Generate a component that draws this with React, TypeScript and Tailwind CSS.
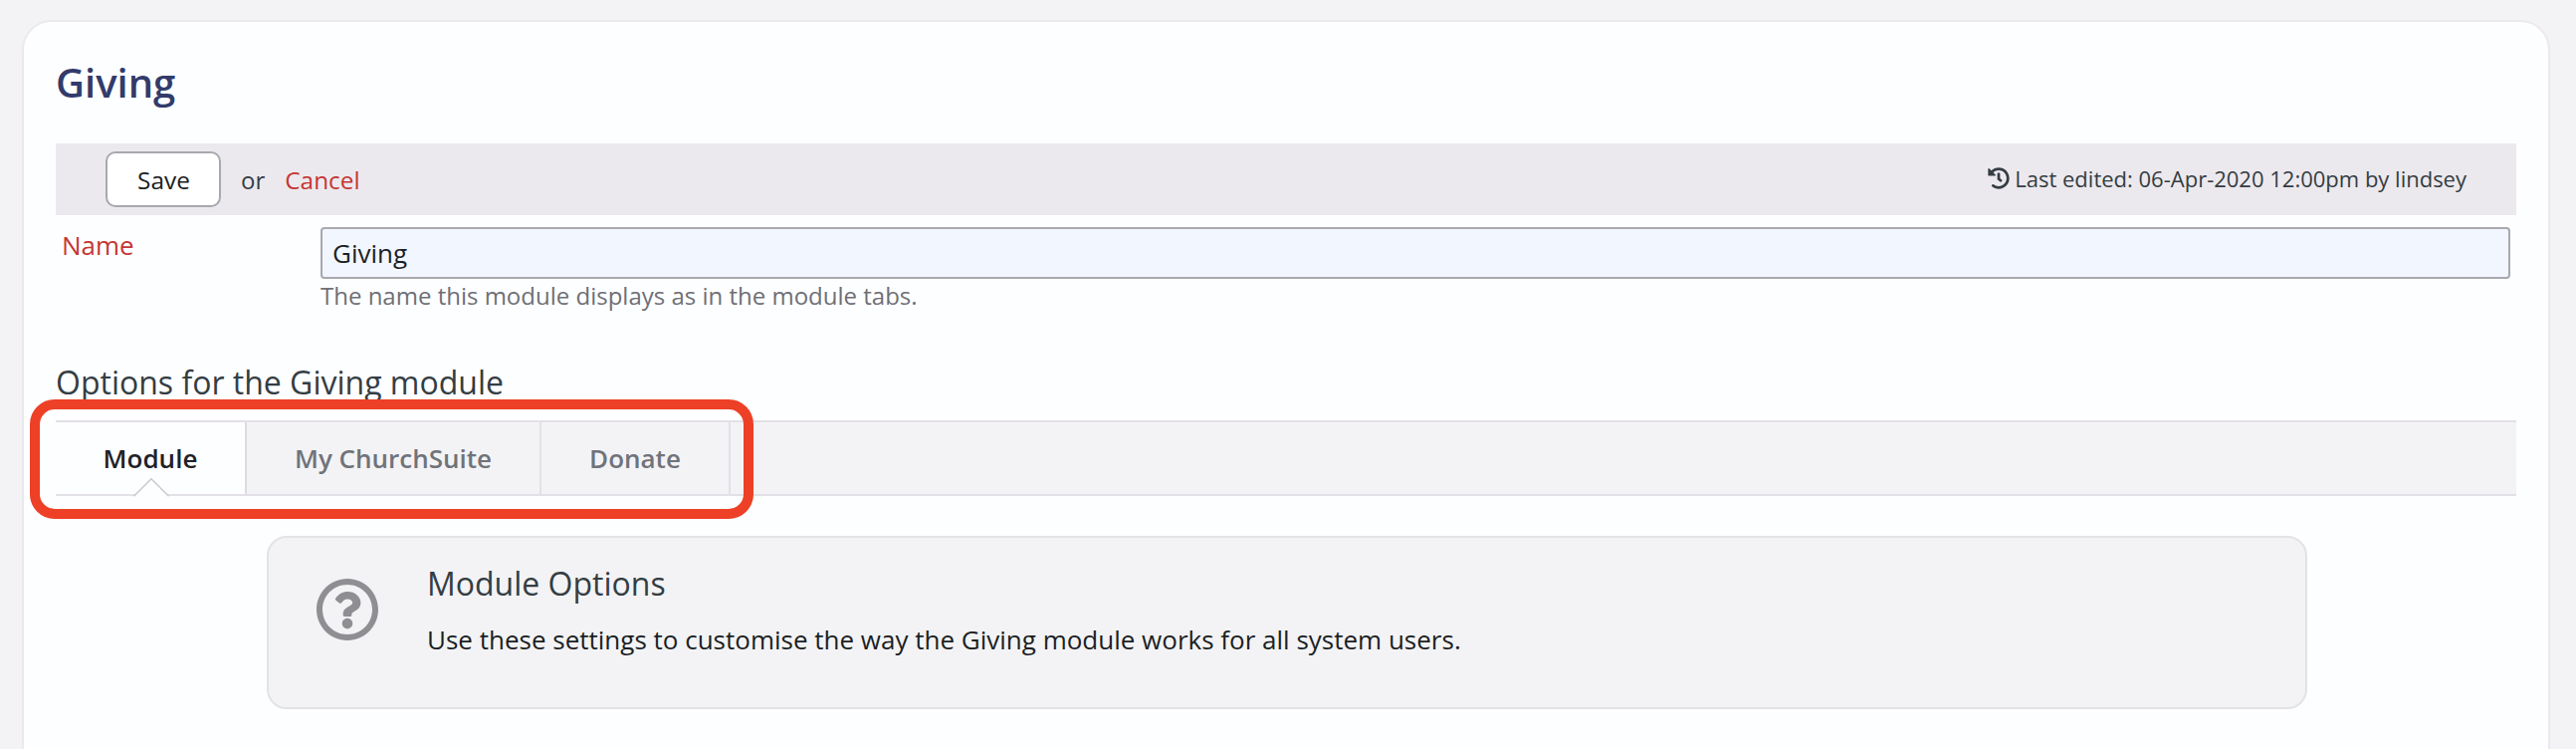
import React from "react";
import { FaHistory, FaRegQuestionCircle } from "react-icons/fa";

function ActionBar() {
  return (
    <div className="mt-[31px] flex h-[72px] items-center bg-[#ece9ee] px-[50px] text-[24.4px] leading-[36px] text-[#343d43]">
      <button className="flex h-14 w-[116px] items-center justify-center rounded-[10px] border-2 border-[#a8a8ae] bg-white pt-[2px] pl-px text-[#1b1f24]">
        Save
      </button>
      <span className="ml-5 pt-[2px] text-[24px]">or</span>
      <a className="ml-5 pt-[2px] text-[#c53734]">Cancel</a>
      <span className="ml-auto flex items-center pb-[2px] text-[22px] leading-[30px]">
        <FaHistory className="mr-[5px] size-[22px]" />
        Last edited: 06-Apr-2020 12:00pm by lindsey
      </span>
    </div>
  );
}

function NameField() {
  return (
    <div className="flex pt-3 pr-[6px]">
      <label className="w-[266px] shrink-0 pl-[6px] text-[26px] leading-9 text-[#c53734]">Name</label>
      <div className="grow">
        <div className="flex h-[52px] items-center rounded-[4px] border-2 border-[#a8a8ae] bg-[#f2f6fe] px-[10px] text-[26px] text-[#1b1f24]">
          Giving
        </div>
        <p className="text-[24px] leading-[34px] text-[#6f6f76]">
          The name this module displays as in the module tabs.
        </p>
      </div>
    </div>
  );
}

function Tabs() {
  return (
    <div className="mt-4 flex h-[76px] border-y-2 border-[#e3e0e8] bg-[#f3f3f5] text-[26px] font-semibold text-[#70737a]">
      <div className="relative flex w-[192px] items-center justify-center border-r-2 border-[#dcdbdf] bg-[#fdfeff] text-[#1f2227]">
        Module
        <svg className="absolute top-[55px] left-[77px]" width="38" height="20" viewBox="0 0 38 20" fill="none">
          <path d="M1.5 19.5 19 2 36.5 19.5V20H1.5Z" fill="#fdfeff" />
          <path d="M1.5 19.2 19 1.7 36.5 19.2" stroke="#c8c8cc" strokeWidth="1.4" />
        </svg>
      </div>
      <div className="flex w-[296px] items-center justify-center border-r-2 border-[#e3e0e8]">My ChurchSuite</div>
      <div className="flex w-[190px] items-center justify-center border-r-2 border-[#e3e0e8]">Donate</div>
    </div>
  );
}

function ModuleOptions() {
  return (
    <div className="mt-10 mr-[210px] ml-[212px] flex h-[174px] rounded-[20px] border-2 border-[#e3e3e5] bg-[#f3f3f5] pt-[22px] pl-[47px]">
      <FaRegQuestionCircle className="mt-[18px] size-16 shrink-0 text-[#8e8e93]" />
      <div className="ml-12">
        <h3 className="text-[32px] leading-[48px] text-[#343d43]">Module Options</h3>
        <p className="mt-[10px] text-[26px] leading-[44px] text-[#1b1f24]">
          Use these settings to customise the way the Giving module works for all system users.
        </p>
      </div>
    </div>
  );
}

export default function App() {
  return (
    <div className="relative h-[752px] w-[2588px] overflow-hidden bg-[#f3f3f5] pt-5 pr-[26px] pl-[22px] font-['Open_Sans',sans-serif]">
      <main className="h-[800px] rounded-[30px] border-2 border-[#ebe9ed] bg-[#fdfeff] px-8 pt-[31px]">
        <h1 className="text-[40px] leading-[60px] font-semibold text-[#323b6b]">Giving</h1>
        <ActionBar />
        <NameField />
        <h2 className="mt-12 text-[32px] leading-[44px] text-[#343d43]">Options for the Giving module</h2>
        <Tabs />
        <ModuleOptions />
      </main>
      <div className="absolute top-[401px] left-[30px] h-[120px] w-[727px] rounded-[25px] border-[10px] border-[#ed4027]" />
    </div>
  );
}
